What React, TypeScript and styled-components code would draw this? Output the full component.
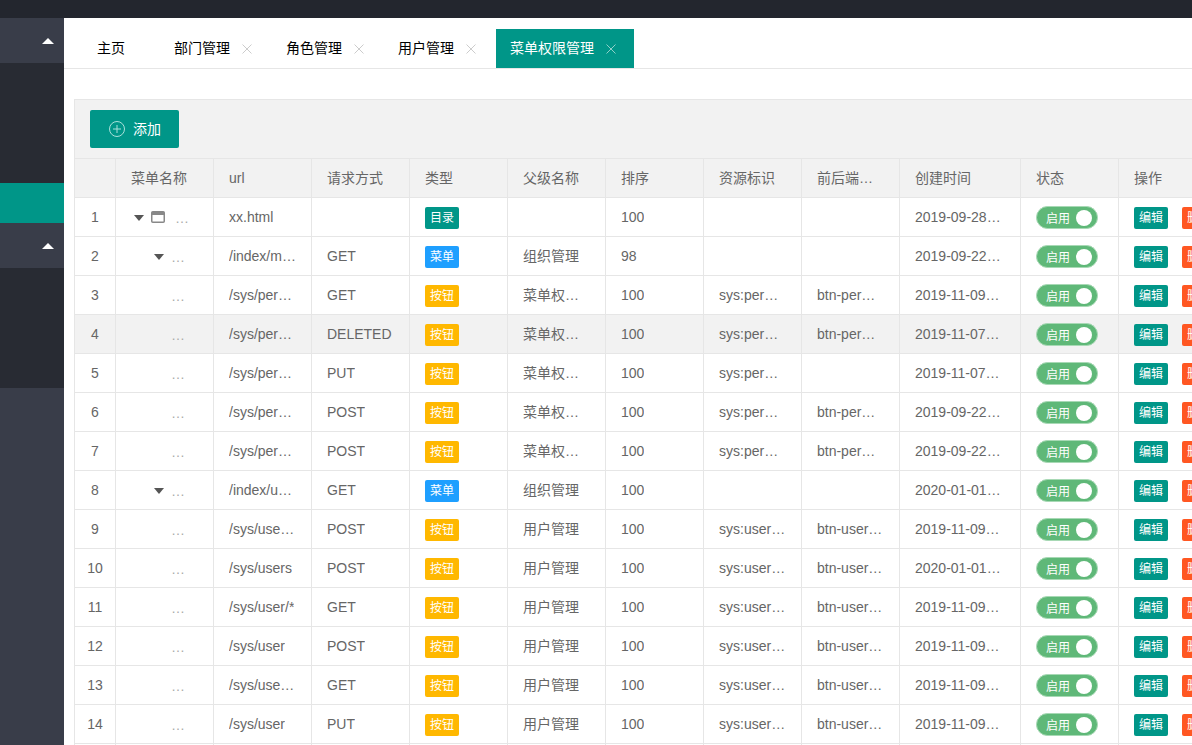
import React from 'react';
import styled, { createGlobalStyle } from 'styled-components';

const GlobalStyle = createGlobalStyle`
  html, body {
    margin: 0;
    padding: 0;
    height: 100%;
    overflow: hidden;
    background: #fff;
    font-family: "Liberation Sans", "Noto Sans CJK SC", sans-serif;
    font-size: 14px;
    color: #666;
  }
  * { box-sizing: border-box; }
`;

const Page = styled.div`
  width: 1192px;
  height: 745px;
  display: flex;
  flex-direction: column;
  overflow: hidden;
`;

const TopBar = styled.div`
  height: 18px;
  flex: none;
  background: #23262e;
`;

const Body = styled.div`
  flex: 1;
  display: flex;
  min-height: 0;
`;

const Sidebar = styled.div`
  width: 64px;
  flex: none;
  background: #393d49;
`;

const NavHead = styled.div`
  height: 45px;
  background: #393d49;
  display: flex;
  align-items: center;
  justify-content: flex-end;
  padding-right: 10px;
`;

const Caret = styled.span`
  width: 0;
  height: 0;
  border-left: 6px solid transparent;
  border-right: 6px solid transparent;
  border-bottom: 6px solid #fff;
`;

const NavChild = styled.div<{ $h: number }>`
  height: ${(p) => p.$h}px;
  background: #282b33;
`;

const NavActive = styled.div`
  height: 40px;
  background: #009688;
`;

const Main = styled.div`
  flex: 1;
  min-width: 0;
  background: #fff;
  overflow: hidden;
`;

const Tabs = styled.div`
  height: 51px;
  border-bottom: 1px solid #e6e6e6;
  display: flex;
  align-items: flex-end;
  padding-left: 18px;
`;

const Tab = styled.div<{ $active?: boolean; $w: number }>`
  width: ${(p) => p.$w}px;
  height: 39px;
  display: flex;
  align-items: center;
  padding: 0 0 1px ${(p) => (p.$active ? '14px' : '15px')};
  font-size: 14px;
  line-height: 20px;
  color: ${(p) => (p.$active ? '#fff' : '#000')};
  background: ${(p) => (p.$active ? '#009688' : 'transparent')};
`;

const TabClose = styled.span<{ $active?: boolean }>`
  margin: 1px 0 0 12px;
  display: inline-flex;
  color: ${(p) => (p.$active ? '#8fd0c9' : '#ccc')};
`;

const Content = styled.div`
  padding: 30px 0 0 10px;
`;

const TableBox = styled.div`
  width: 1150px;
  border: 1px solid #e6e6e6;
  border-right: none;
`;

const Toolbar = styled.div`
  height: 59px;
  background: #f2f2f2;
  border-bottom: 1px solid #e6e6e6;
  padding: 10px 15px;
`;

const AddButton = styled.button`
  width: 89px;
  height: 38px;
  border: none;
  border-radius: 2px;
  background: #009688;
  color: #fff;
  font: inherit;
  font-size: 14px;
  line-height: 20px;
  display: flex;
  align-items: center;
  padding: 0 0 0 19px;
  gap: 8px;
`;

const Row = styled.div<{ $head?: boolean; $hover?: boolean }>`
  display: grid;
  grid-template-columns: 40px 98px 98px 98px 98px 98px 98px 98px 98px 121px 98px 1fr;
  height: 39px;
  border-bottom: 1px solid #e6e6e6;
  background: ${(p) => (p.$head ? '#f2f2f2' : p.$hover ? '#f2f2f2' : '#fff')};
`;

const Cell = styled.div<{ $center?: boolean }>`
  border-left: 1px solid #e6e6e6;
  padding: 0 15px;
  display: flex;
  align-items: center;
  justify-content: ${(p) => (p.$center ? 'center' : 'flex-start')};
  white-space: nowrap;
  overflow: hidden;
  font-size: 14px;
  line-height: 20px;
  color: #666;
  &:first-child { border-left: none; }
`;

const Clip = styled.span`
  display: block;
  overflow: hidden;
  text-overflow: ellipsis;
  white-space: nowrap;
  min-width: 0;
`;

const TimeClip = styled(Clip)`
  max-width: 88px;
`;

const TreeCell = styled(Cell)`
  padding: 0 0 0 15px;
`;

const TreeIndent = styled.span<{ $level: number }>`
  flex: none;
  width: ${(p) => p.$level * 20}px;
`;

const TreeArrow = styled.span`
  flex: none;
  width: 0;
  height: 0;
  margin: 1px 0 0 3px;
  border-left: 5.5px solid transparent;
  border-right: 5.5px solid transparent;
  border-top: 6px solid #555;
`;

const Dots = styled.span<{ $left: number }>`
  margin-left: ${(p) => p.$left}px;
  color: #aaa;
  font-size: 14px;
  margin-top: 2px;
`;

const TypeBadge = styled.span<{ $bg: string }>`
  height: 22px;
  width: 34px;
  margin-top: 1px;
  border-radius: 2px;
  background: ${(p) => p.$bg};
  color: #fff;
  font-size: 12px;
  display: flex;
  align-items: center;
  justify-content: center;
`;

const Switch = styled.span`
  position: relative;
  width: 62px;
  height: 23px;
  border-radius: 12px;
  background: #5fb878;
  border: 1px solid #a8d9b5;
  color: #fff;
  font-size: 12px;
  display: flex;
  align-items: center;
  padding: 2px 0 0 9px;
  margin-top: 1px;
`;

const Knob = styled.span`
  position: absolute;
  right: 5px;
  top: 2.5px;
  width: 16px;
  height: 16px;
  border-radius: 50%;
  background: #fff;
`;

const ActionBtn = styled.span<{ $bg: string }>`
  flex: none;
  width: 34px;
  height: 22px;
  margin: 1px 14px 0 0;
  border-radius: 2px;
  background: ${(p) => p.$bg};
  color: #fff;
  font-size: 12px;
  display: flex;
  align-items: center;
  justify-content: center;
`;

const CloseIcon = () => (
  <svg width="10" height="10" viewBox="0 0 10 10" fill="none" stroke="currentColor" strokeWidth="1">
    <path d="M0.5 0.5L9.5 9.5M9.5 0.5L0.5 9.5" />
  </svg>
);

const PlusCircle = () => (
  <svg width="16" height="16" viewBox="0 0 16 16" fill="none" stroke="#a9e0da" strokeWidth="1">
    <circle cx="8" cy="8" r="7.5" />
    <path d="M8 4V12M4 8H12" />
  </svg>
);

const WindowIcon = () => (
  <svg width="14" height="12" viewBox="0 0 14 12" style={{ flex: 'none', marginLeft: 7 }}>
    <rect x="0.75" y="0.75" width="12.5" height="10.5" rx="1" fill="none" stroke="#888" strokeWidth="1.5" />
    <rect x="1" y="1" width="12" height="3" fill="#888" />
  </svg>
);

type Item = {
  level: number;
  arrow?: boolean;
  icon?: boolean;
  url: string;
  method: string;
  type: '目录' | '菜单' | '按钮';
  parent: string;
  sort: string;
  perm: string;
  front: string;
  time: string;
  hover?: boolean;
};

const badgeColor = { 目录: '#009688', 菜单: '#1e9fff', 按钮: '#ffb800' };

const rows: Item[] = [
  { level: 0, arrow: true, icon: true, url: 'xx.html', method: '', type: '目录', parent: '', sort: '100', perm: '', front: '', time: '2019-09-28 11:20:15' },
  { level: 1, arrow: true, url: '/index/menu', method: 'GET', type: '菜单', parent: '组织管理', sort: '98', perm: '', front: '', time: '2019-09-22 15:18:12' },
  { level: 2, url: '/sys/permission', method: 'GET', type: '按钮', parent: '菜单权限管理', sort: '100', perm: 'sys:permission', front: 'btn-permission', time: '2019-11-09 22:36:12' },
  { level: 2, url: '/sys/permission', method: 'DELETED', type: '按钮', parent: '菜单权限管理', sort: '100', perm: 'sys:permission', front: 'btn-permission', time: '2019-11-07 22:36:12', hover: true },
  { level: 2, url: '/sys/permission', method: 'PUT', type: '按钮', parent: '菜单权限管理', sort: '100', perm: 'sys:permission', front: '', time: '2019-11-07 22:36:12' },
  { level: 2, url: '/sys/permission', method: 'POST', type: '按钮', parent: '菜单权限管理', sort: '100', perm: 'sys:permission', front: 'btn-permission', time: '2019-09-22 22:36:12' },
  { level: 2, url: '/sys/permission', method: 'POST', type: '按钮', parent: '菜单权限管理', sort: '100', perm: 'sys:permission', front: 'btn-permission', time: '2019-09-22 22:36:12' },
  { level: 1, arrow: true, url: '/index/users', method: 'GET', type: '菜单', parent: '组织管理', sort: '100', perm: '', front: '', time: '2020-01-01 12:00:00' },
  { level: 2, url: '/sys/users/roles', method: 'POST', type: '按钮', parent: '用户管理', sort: '100', perm: 'sys:user:role', front: 'btn-user-role', time: '2019-11-09 22:36:12' },
  { level: 2, url: '/sys/users', method: 'POST', type: '按钮', parent: '用户管理', sort: '100', perm: 'sys:user:list', front: 'btn-user-list', time: '2020-01-01 12:00:00' },
  { level: 2, url: '/sys/user/*', method: 'GET', type: '按钮', parent: '用户管理', sort: '100', perm: 'sys:user:detail', front: 'btn-user-detail', time: '2019-11-09 22:36:12' },
  { level: 2, url: '/sys/user', method: 'POST', type: '按钮', parent: '用户管理', sort: '100', perm: 'sys:user:add', front: 'btn-user-add', time: '2019-11-09 22:36:12' },
  { level: 2, url: '/sys/user/pwd', method: 'GET', type: '按钮', parent: '用户管理', sort: '100', perm: 'sys:user:pwd', front: 'btn-user-pwd', time: '2019-11-09 22:36:12' },
  { level: 2, url: '/sys/user', method: 'PUT', type: '按钮', parent: '用户管理', sort: '100', perm: 'sys:user:update', front: 'btn-user-update', time: '2019-11-09 22:36:12' },
  { level: 2, url: '/sys/user', method: 'DELETED', type: '按钮', parent: '用户管理', sort: '100', perm: 'sys:user:del', front: 'btn-user-del', time: '2019-11-09 22:36:12' },
];

const headers = ['', '菜单名称', 'url', '请求方式', '类型', '父级名称', '排序', '资源标识', '前后端接口', '创建时间', '状态', '操作'];

const tabs = [
  { label: '部门管理', w: 112 },
  { label: '角色管理', w: 112 },
  { label: '用户管理', w: 113 },
];

const App = () => (
  <Page>
    <GlobalStyle />
    <TopBar />
    <Body>
      <Sidebar>
        <NavHead><Caret /></NavHead>
        <NavChild $h={120} />
        <NavActive />
        <NavHead><Caret /></NavHead>
        <NavChild $h={120} />
      </Sidebar>
      <Main>
        <Tabs>
          <Tab $w={77}>主页</Tab>
          {tabs.map((t) => (
            <Tab key={t.label} $w={t.w}>
              {t.label}
              <TabClose><CloseIcon /></TabClose>
            </Tab>
          ))}
          <Tab $active $w={138}>
            菜单权限管理
            <TabClose $active><CloseIcon /></TabClose>
          </Tab>
        </Tabs>
        <Content>
          <TableBox>
            <Toolbar>
              <AddButton><PlusCircle />添加</AddButton>
            </Toolbar>
            <Row $head>
              {headers.map((h, i) => (
                <Cell key={i}><Clip>{h}</Clip></Cell>
              ))}
            </Row>
            {rows.map((r, i) => (
              <Row key={i} $hover={r.hover}>
                <Cell $center>{i + 1}</Cell>
                <TreeCell>
                  <TreeIndent $level={r.level} />
                  {r.arrow && <TreeArrow />}
                  {r.icon && <WindowIcon />}
                  <Dots $left={r.level === 2 ? 0 : r.icon ? 10 : 7}>…</Dots>
                </TreeCell>
                <Cell><Clip>{r.url}</Clip></Cell>
                <Cell><Clip>{r.method}</Clip></Cell>
                <Cell><TypeBadge $bg={badgeColor[r.type]}>{r.type}</TypeBadge></Cell>
                <Cell><Clip>{r.parent}</Clip></Cell>
                <Cell><Clip>{r.sort}</Clip></Cell>
                <Cell><Clip>{r.perm}</Clip></Cell>
                <Cell><Clip>{r.front}</Clip></Cell>
                <Cell><TimeClip>{r.time}</TimeClip></Cell>
                <Cell>
                  <Switch>启用<Knob /></Switch>
                </Cell>
                <Cell>
                  <ActionBtn $bg="#009688">编辑</ActionBtn>
                  <ActionBtn $bg="#ff5722">删除</ActionBtn>
                </Cell>
              </Row>
            ))}
          </TableBox>
        </Content>
      </Main>
    </Body>
  </Page>
);

export default App;
